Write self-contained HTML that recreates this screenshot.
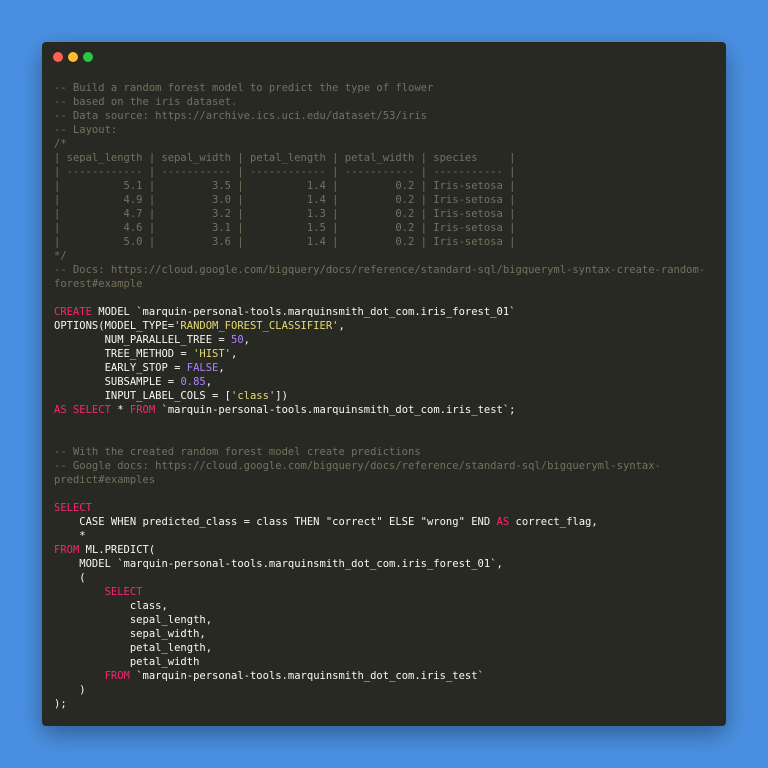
<!DOCTYPE html>
<html><head><style>
html,body{margin:0;padding:0;background:#4a90e2;width:768px;height:768px;overflow:hidden}
.win{position:absolute;left:42px;top:42px;width:684px;height:684px;background:#282923;border-radius:4px;box-shadow:0 8px 24px rgba(0,0,0,.35)}
.d{position:absolute;top:10px;width:10px;height:10px;border-radius:50%}
pre{position:absolute;left:12px;top:39px;margin:0;font-family:"DejaVu Sans Mono","Liberation Mono",monospace;font-size:10.5px;line-height:14px;color:#f8f8f2;white-space:pre}
.c{color:#75715e}.k{color:#f92672}.s{color:#e6db74}.n{color:#ae81ff}
</style></head><body>
<div class="win">
<div class="d" style="left:11px;background:#ff5f56"></div>
<div class="d" style="left:26px;background:#ffbd2e"></div>
<div class="d" style="left:41px;background:#27c93f"></div>
<pre><span class="c">-- Build a random forest model to predict the type of flower
-- based on the iris dataset.
-- Data source: https://archive.ics.uci.edu/dataset/53/iris
-- Layout:
/*
| sepal_length | sepal_width | petal_length | petal_width | species     |
| ------------ | ----------- | ------------ | ----------- | ----------- |
|          5.1 |         3.5 |          1.4 |         0.2 | Iris-setosa |
|          4.9 |         3.0 |          1.4 |         0.2 | Iris-setosa |
|          4.7 |         3.2 |          1.3 |         0.2 | Iris-setosa |
|          4.6 |         3.1 |          1.5 |         0.2 | Iris-setosa |
|          5.0 |         3.6 |          1.4 |         0.2 | Iris-setosa |
*/
-- Docs: https://cloud.google.com/bigquery/docs/reference/standard-sql/bigqueryml-syntax-create-random-
forest#example</span>

<span class="k">CREATE</span> MODEL `marquin-personal-tools.marquinsmith_dot_com.iris_forest_01`
OPTIONS(MODEL_TYPE=<span class="s">'RANDOM_FOREST_CLASSIFIER'</span>,
        NUM_PARALLEL_TREE = <span class="n">50</span>,
        TREE_METHOD = <span class="s">'HIST'</span>,
        EARLY_STOP = <span class="n">FALSE</span>,
        SUBSAMPLE = <span class="n">0.85</span>,
        INPUT_LABEL_COLS = [<span class="s">'class'</span>])
<span class="k">AS SELECT</span> * <span class="k">FROM</span> `marquin-personal-tools.marquinsmith_dot_com.iris_test`;


<span class="c">-- With the created random forest model create predictions
-- Google docs: https://cloud.google.com/bigquery/docs/reference/standard-sql/bigqueryml-syntax-
predict#examples</span>

<span class="k">SELECT</span>
    CASE WHEN predicted_class = class THEN "correct" ELSE "wrong" END <span class="k">AS</span> correct_flag,
    *
<span class="k">FROM</span> ML.PREDICT(
    MODEL `marquin-personal-tools.marquinsmith_dot_com.iris_forest_01`,
    (
        <span class="k">SELECT</span>
            class,
            sepal_length,
            sepal_width,
            petal_length,
            petal_width
        <span class="k">FROM</span> `marquin-personal-tools.marquinsmith_dot_com.iris_test`
    )
);</pre>
</div>
</body></html>
